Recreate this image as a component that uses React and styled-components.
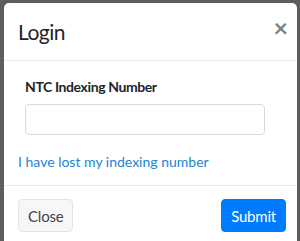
import React from "react";
import styled, { createGlobalStyle } from "styled-components";

const Global = createGlobalStyle`
  html, body {
    margin: 0;
    padding: 0;
    background: #5e5e5e;
    font-family: Lato, "Open Sans", sans-serif;
    overflow: hidden;
  }
`;

const Backdrop = styled.div`
  height: 241px;
  padding: 3px 3px 0 4px;
  box-sizing: border-box;
`;

const Modal = styled.div`
  background: #fff;
  border-radius: 5px 5px 0 0;
  height: 100%;
  display: flex;
  flex-direction: column;
`;

const Header = styled.div`
  height: 58px;
  box-sizing: border-box;
  display: flex;
  align-items: center;
  justify-content: space-between;
  padding: 0 9px 0 14px;
  border-bottom: 1px solid #e9ecef;
`;

const Title = styled.h5`
  margin: 0;
  font-size: 21px;
  font-weight: 400;
  letter-spacing: -0.5px;
  color: #212529;
`;

const CloseX = styled.button`
  border: 0;
  background: none;
  padding: 0;
  font-size: 25px;
  font-weight: 700;
  line-height: 1;
  color: #808080;
  margin-top: -8px;
  font-family: Lato, sans-serif;
`;

const Body = styled.div`
  padding: 17px 14px 15px;
  border-bottom: 1px solid #e9ecef;
`;

const Group = styled.div`
  padding: 0 7px;
  margin-bottom: 16px;
`;

const Label = styled.label`
  display: block;
  font-size: 14px;
  font-weight: 700;
  letter-spacing: -0.4px;
  color: #212529;
  margin-bottom: 9px;
`;

const Input = styled.input`
  display: block;
  width: 240px;
  height: 31px;
  box-sizing: border-box;
  border: 1px solid #d6dade;
  border-radius: 4px;
  outline: none;
`;

const Link = styled.a`
  font-size: 14px;
  color: #1a84d8;
  text-decoration: none;
`;

const Footer = styled.div`
  display: flex;
  justify-content: space-between;
  padding: 13px 11px 0 14px;
`;

const Button = styled.button`
  height: 33px;
  padding: 0 9px;
  border-radius: 4px;
  font-family: Lato, sans-serif;
  font-size: 15px;
  letter-spacing: -0.2px;
  border: 1px solid ${(p) => (p.primary ? "#007bff" : "#e2e5e8")};
  background: ${(p) => (p.primary ? "#007bff" : "#f6f7f8")};
  color: ${(p) => (p.primary ? "#fff" : "#444")};
`;

export default function App() {
  return (
    <>
      <Global />
      <Backdrop>
        <Modal>
          <Header>
            <Title>Login</Title>
            <CloseX>×</CloseX>
          </Header>
          <Body>
            <Group>
              <Label>NTC Indexing Number</Label>
              <Input />
            </Group>
            <Link href="#">I have lost my indexing number</Link>
          </Body>
          <Footer>
            <Button>Close</Button>
            <Button primary>Submit</Button>
          </Footer>
        </Modal>
      </Backdrop>
    </>
  );
}
